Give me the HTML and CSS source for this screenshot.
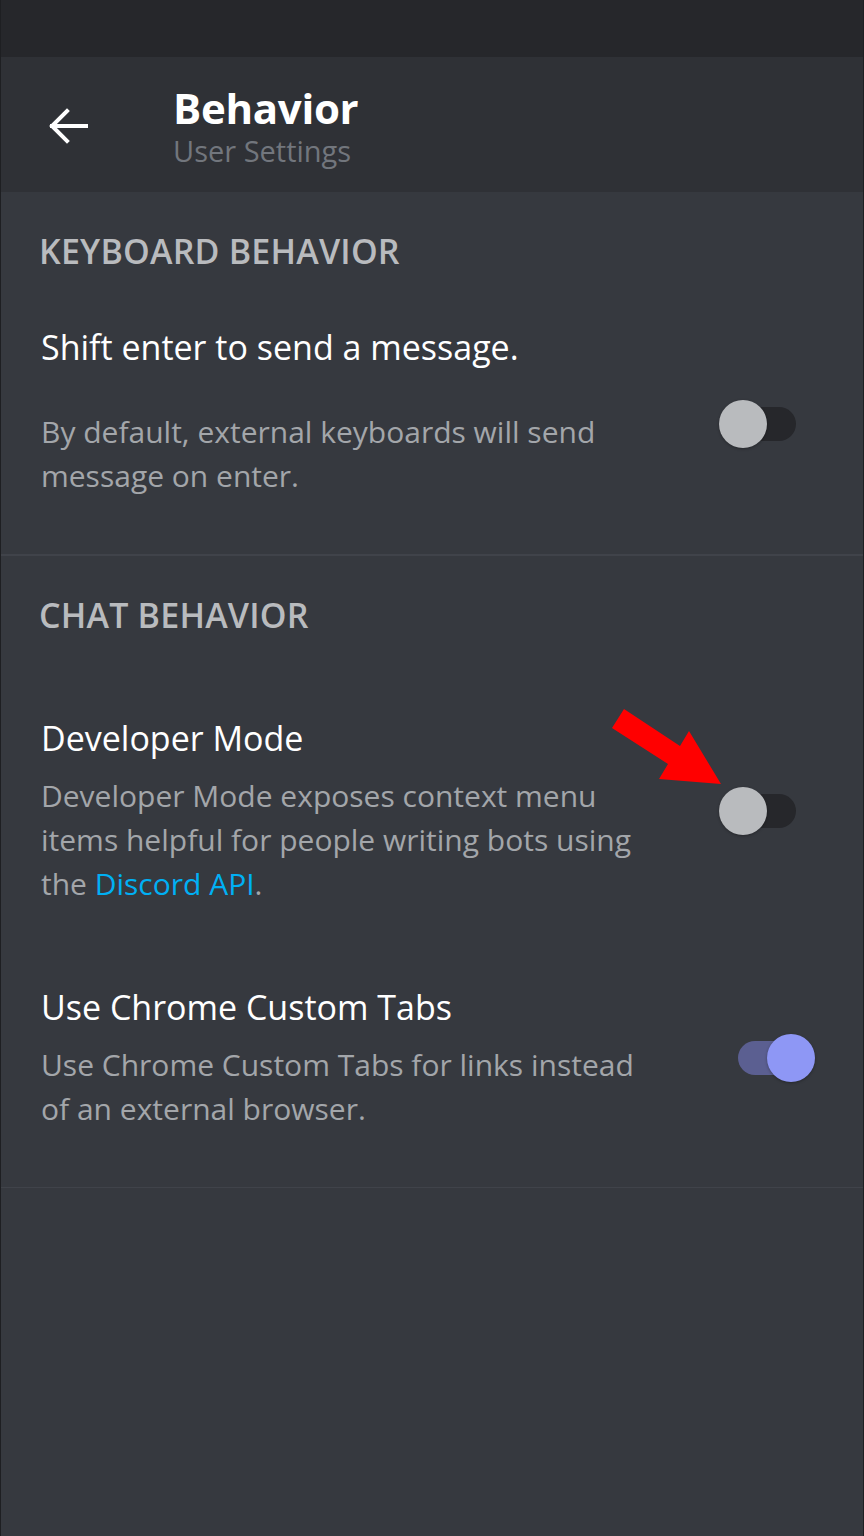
FILE: index.html
```html
<!DOCTYPE html>
<html>
<head>
<meta charset="utf-8">
<link rel="stylesheet" href="styles.css">
</head>
<body>
<div class="screen">
  <div class="statusbar"></div>
  <header class="header">
    <svg class="back" width="40" height="40" viewBox="0 0 40 40" aria-hidden="true">
      <path d="M38 20H4M19 5L4 20l15 15" fill="none" stroke="#ffffff" stroke-width="4" stroke-linecap="square"/>
    </svg>
    <div class="titles">
      <div class="title">Behavior</div>
      <div class="subtitle">User Settings</div>
    </div>
  </header>

  <section class="section">
    <h2 class="section-heading">KEYBOARD BEHAVIOR</h2>
    <div class="row row-first">
      <div class="row-text">
        <div class="row-title row-title-tall">Shift enter to send a message.</div>
        <div class="row-desc">By default, external keyboards will send<br>message on enter.</div>
      </div>
      <div class="toggle toggle-low"><span class="track"></span><span class="knob"></span></div>
    </div>
  </section>

  <section class="section">
    <h2 class="section-heading">CHAT BEHAVIOR</h2>
    <div class="row">
      <div class="row-text">
        <div class="row-title">Developer Mode</div>
        <div class="row-desc">Developer Mode exposes context menu<br>items helpful for people writing bots using<br>the <span class="link">Discord API</span>.</div>
      </div>
      <div class="toggle"><span class="track"></span><span class="knob"></span></div>
    </div>
    <div class="row">
      <div class="row-text">
        <div class="row-title">Use Chrome Custom Tabs</div>
        <div class="row-desc">Use Chrome Custom Tabs for links instead<br>of an external browser.</div>
      </div>
      <div class="toggle on"><span class="track"></span><span class="knob"></span></div>
    </div>
  </section>

  <svg class="annotation" width="130" height="90" viewBox="600 700 130 90" aria-hidden="true">
    <polygon points="623,709 679,746 688,731 720,784 658,779 667,764 611,728" fill="#ff0000"/>
  </svg>
</div>
</body>
</html>
```
FILE: styles.css
```css
html, body {
  margin: 0;
  padding: 0;
  background: #36393f;
}
.screen {
  position: relative;
  width: 864px;
  height: 1536px;
  box-sizing: border-box;
  border-left: 1px solid #1e1f22;
  border-right: 1px solid #1e1f22;
  background: #36393f;
  font-family: "Open Sans", "Noto Sans", sans-serif;
  overflow: hidden;
}
.statusbar {
  height: 57px;
  background: #26272b;
}
.header {
  height: 135px;
  background: #2f3136;
  display: flex;
  align-items: center;
  padding-left: 47px;
}
.back {
  display: block;
  margin-top: 2px;
}
.titles {
  margin-left: 85px;
  margin-top: 2px;
}
.title {
  color: #ffffff;
  font-weight: 700;
  font-size: 42px;
  line-height: 50px;
  letter-spacing: -0.3px;
}
.subtitle {
  color: #72767d;
  font-size: 29px;
  line-height: 36px;
}
.section {
  border-bottom: 2px solid #40434a;
  padding: 37px 0 0 0;
}
.section:last-of-type {
  border-bottom-width: 1px;
}
.section-heading {
  margin: 0 0 0 38px;
  color: #b9bbbe;
  font-size: 34px;
  font-weight: 600;
  line-height: 44px;
  letter-spacing: 0.2px;
}
.row {
  display: flex;
  align-items: center;
  padding: 79px 48px 57px 40px;
}
.row + .row {
  padding-top: 22px;
  padding-bottom: 56px;
}
.row-first {
  padding-top: 52px;
  padding-bottom: 56px;
}
.row-text {
  flex: 1;
}
.row-title {
  color: #ffffff;
  font-size: 34px;
  line-height: 44px;
  margin-bottom: 14px;
}
.row-title-tall {
  margin-bottom: 41px;
}
.row-desc {
  color: #a3a6aa;
  font-size: 30px;
  line-height: 44px;
}
.link {
  color: #00b0f4;
}
.toggle {
  position: relative;
  width: 96px;
  height: 48px;
  flex: none;
}
.toggle-low {
  margin-top: 24px;
}
.track {
  position: absolute;
  left: 19px;
  top: 7px;
  width: 58px;
  height: 34px;
  border-radius: 17px;
  background: #26272b;
}
.knob {
  position: absolute;
  left: 0;
  top: 0;
  width: 48px;
  height: 48px;
  border-radius: 50%;
  background: #b9bbbe;
  box-shadow: 0 1px 3px rgba(0,0,0,0.3);
}
.toggle.on .track {
  background: #5b5f91;
}
.toggle.on .knob {
  left: 48px;
  background: #8e97f5;
}
.annotation {
  position: absolute;
  left: 600px;
  top: 700px;
}
```
